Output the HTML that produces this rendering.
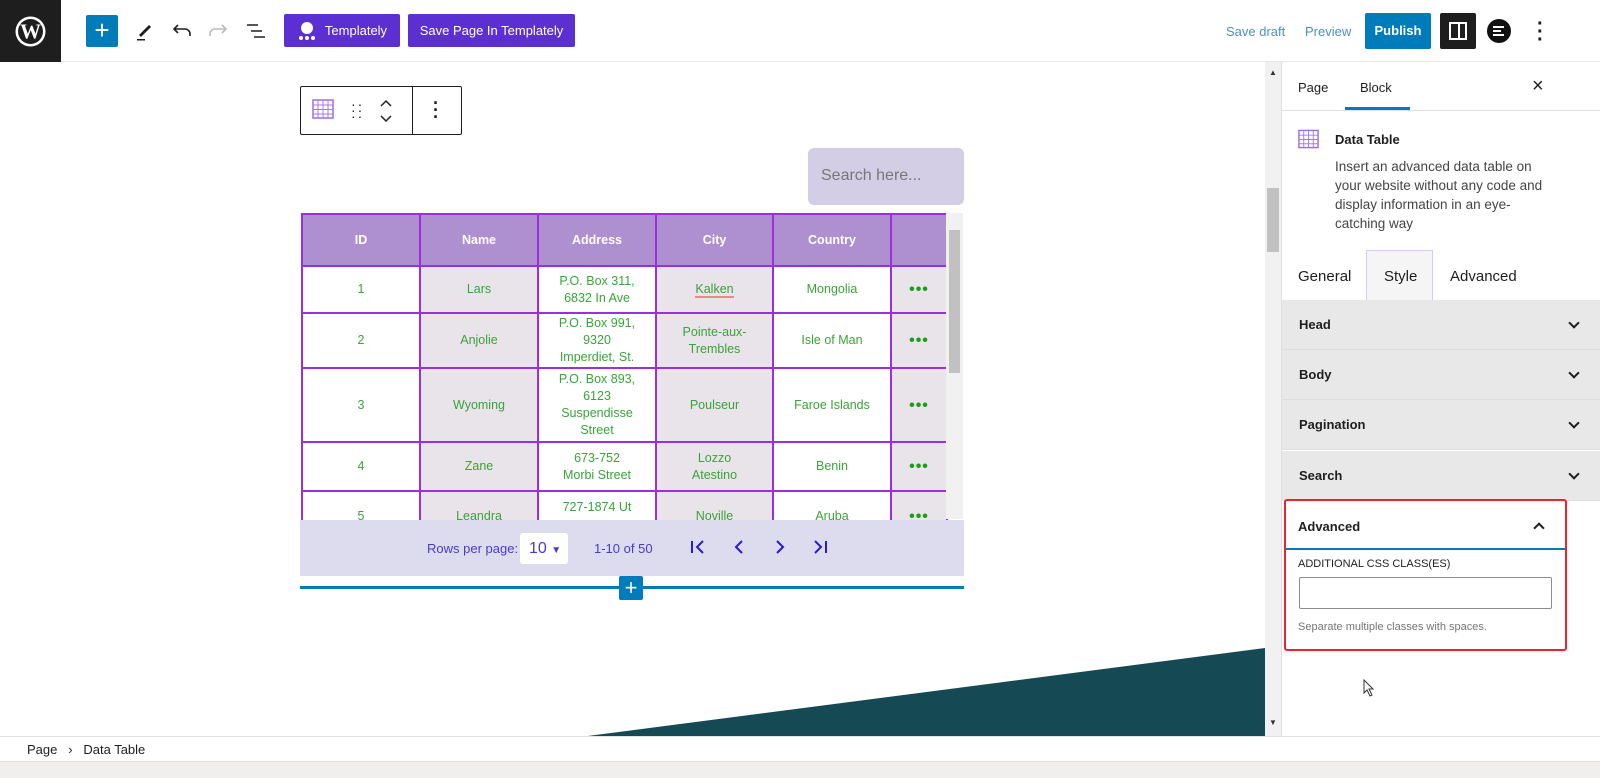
<!DOCTYPE html>
<html><head><style>
*{box-sizing:border-box;margin:0;padding:0}
body{width:1600px;height:778px;overflow:hidden;background:#fff;font-family:"Liberation Sans",sans-serif;position:relative;font-size:13px;color:#1e1e1e}
.abs{position:absolute}
.top{left:0;top:0;width:1600px;height:62px;border-bottom:1px solid #e6e6e6;background:#fff}
.btnp{background:#5b2fd1;color:#fff;border-radius:2px;height:33px;top:14px;font-size:13px;display:flex;align-items:center;justify-content:center}
table{border-collapse:collapse;position:absolute;left:301px;top:213px;table-layout:fixed}
td,th{border:2px solid #9a2fe0;text-align:center;font-size:12.5px;color:#3aa33a;font-weight:normal;line-height:17px}
th{background:#ae8fd0;color:#fff;font-weight:bold;height:52px}
td.g{background:#e8e4ea}
.dots{color:#1a9e1a;font-weight:bold;font-size:16px;letter-spacing:1px}
.acc{left:1282px;width:318px;height:50px;background:#e8e8e8;border-bottom:1px solid #ddd;font-size:13px;padding:0 0 0 17px;display:flex;align-items:center;justify-content:space-between}
.acc span.c{margin-right:22px;width:8px;height:8px;border-right:2px solid #1e1e1e;border-bottom:2px solid #1e1e1e;transform:rotate(45deg);margin-top:-4px}
.pg{position:absolute;top:19px}
</style></head><body>
<div class="abs top"></div>
<div class="abs" style="left:0;top:0;width:61px;height:62px;background:#1e1e1e"></div>
<svg class="abs" style="left:14px;top:15px" width="33" height="33" viewBox="0 0 33 33"><circle cx="16.5" cy="16.5" r="15" fill="#fff"/><circle cx="16.5" cy="16.5" r="12.5" fill="#1e1e1e"/><text x="16.5" y="23.5" text-anchor="middle" font-family="Liberation Serif" font-weight="bold" font-size="21" fill="#fff">W</text></svg>
<div class="abs" style="left:86px;top:15px;width:32px;height:32px;background:#007cba;border-radius:2px;color:#fff;font-size:26px;line-height:30px;text-align:center">+</div>
<svg class="abs" style="left:134px;top:20px" width="22" height="22" viewBox="0 0 22 22"><path d="M5 15 L15 5 L17 7 L7 17 Z" fill="#1e1e1e"/><rect x="3" y="19" width="8" height="1.5" fill="#1e1e1e"/></svg>
<svg class="abs" style="left:171px;top:22px" width="22" height="18" viewBox="0 0 22 18"><path d="M7 3 L3 7 L7 11 M3 7 H14 a5 5 0 0 1 5 5 V14" fill="none" stroke="#1e1e1e" stroke-width="1.6"/></svg>
<svg class="abs" style="left:207px;top:22px" width="22" height="18" viewBox="0 0 22 18"><path d="M15 3 L19 7 L15 11 M19 7 H8 a5 5 0 0 0 -5 5 V14" fill="none" stroke="#bbb" stroke-width="1.6"/></svg>
<svg class="abs" style="left:245px;top:22px" width="22" height="18" viewBox="0 0 22 18"><path d="M2 3 H13 M6 9 H17 M9 15 H20" stroke="#1e1e1e" stroke-width="1.6"/></svg>
<div class="abs btnp" style="left:284px;width:116px"><svg width="20" height="22" viewBox="0 0 20 22" style="margin-right:8px"><circle cx="10" cy="8" r="6" fill="#fff"/><circle cx="4" cy="18" r="2" fill="#fff"/><circle cx="10" cy="18" r="2" fill="#fff"/><circle cx="16" cy="18" r="2" fill="#fff"/></svg>Templately</div>
<div class="abs btnp" style="left:408px;width:167px">Save Page In Templately</div>
<div class="abs" style="left:1226px;top:24px;color:#4a90c8;font-size:13px">Save draft</div>
<div class="abs" style="left:1305px;top:24px;color:#4a90c8;font-size:13px">Preview</div>
<div class="abs" style="left:1365px;top:13px;width:66px;height:36px;background:#007cba;color:#fff;border-radius:2px;text-align:center;line-height:36px;font-size:13px;font-weight:bold">Publish</div>
<div class="abs" style="left:1440px;top:13px;width:36px;height:36px;background:#1e1e1e;border-radius:2px"><div class="abs" style="left:9px;top:9px;width:18px;height:18px;border:2px solid #fff"></div><div class="abs" style="left:18px;top:9px;width:2px;height:18px;background:#fff"></div></div>
<div class="abs" style="left:1487px;top:19px;width:24px;height:24px;border-radius:50%;background:#111"><div class="abs" style="left:6px;top:7px;width:11px;height:2px;background:#fff"></div><div class="abs" style="left:6px;top:11px;width:8px;height:2px;background:#fff"></div><div class="abs" style="left:6px;top:15px;width:11px;height:2px;background:#fff"></div></div>
<div class="abs" style="left:1537px;top:20px;color:#1e1e1e;font-size:20px;line-height:8px;font-weight:bold">·<br>·<br>·</div>

<div class="abs" style="left:300px;top:86px;width:162px;height:49px;border:1px solid #1e1e1e;border-radius:2px;background:#fff"></div>
<div class="abs" style="left:412px;top:86px;width:1px;height:49px;background:#1e1e1e"></div>
<svg class="abs" style="left:312px;top:99px" width="22" height="20" viewBox="0 0 22 20"><rect x="1" y="1" width="20" height="18" fill="none" stroke="#9b6cf0" stroke-width="1.5"/><path d="M1 6H21M1 10.5H21M1 15H21M6 1V19M11 1V19M16 1V19" stroke="#a77af0" stroke-width="1"/></svg>
<div class="abs" style="left:351px;top:101px;color:#1e1e1e;font-size:14px;line-height:6px;letter-spacing:2px">··<br>··<br>··</div>
<svg class="abs" style="left:378px;top:97px" width="16" height="28" viewBox="0 0 16 28"><path d="M3 9 L8 4 L13 9 M3 19 L8 24 L13 19" fill="none" stroke="#1e1e1e" stroke-width="1.5"/></svg>
<div class="abs" style="left:433px;top:100px;color:#1e1e1e;font-size:18px;line-height:7px;font-weight:bold">·<br>·<br>·</div>

<div class="abs" style="left:808px;top:148px;width:156px;height:57px;background:#d3cde6;border-radius:6px;color:#777;font-size:16px;padding:19px 0 0 13px">Search here...</div>

<table>
<colgroup><col width="118"><col width="118"><col width="118"><col width="117"><col width="118"><col width="56"></colgroup>
<tr><th>ID</th><th>Name</th><th>Address</th><th>City</th><th>Country</th><th></th></tr>
<tr style="height:47px"><td>1</td><td class="g">Lars</td><td>P.O. Box 311,<br>6832 In Ave</td><td class="g"><span style="border-bottom:2px solid #e98a8a">Kalken</span></td><td>Mongolia</td><td class="g dots">•••</td></tr>
<tr style="height:55px"><td>2</td><td class="g">Anjolie</td><td>P.O. Box 991,<br>9320<br>Imperdiet, St.</td><td class="g">Pointe-aux-<br>Trembles</td><td>Isle of Man</td><td class="g dots">•••</td></tr>
<tr style="height:74px"><td>3</td><td class="g">Wyoming</td><td>P.O. Box 893,<br>6123<br>Suspendisse<br>Street</td><td class="g">Poulseur</td><td>Faroe Islands</td><td class="g dots">•••</td></tr>
<tr style="height:49px"><td>4</td><td class="g">Zane</td><td>673-752<br>Morbi Street</td><td class="g">Lozzo<br>Atestino</td><td>Benin</td><td class="g dots">•••</td></tr>
<tr style="height:50px"><td>5</td><td class="g">Leandra</td><td>727-1874 Ut<br>&nbsp;</td><td class="g">Noville</td><td>Aruba</td><td class="g dots">•••</td></tr>
</table>
<div class="abs" style="left:946px;top:213px;width:17px;height:306px;background:#f1f1f1"><div class="abs" style="left:3px;top:17px;width:11px;height:143px;background:#c1c1c1"></div></div>
<div class="abs" style="left:300px;top:520px;width:664px;height:56px;background:#dddcee;font-size:13px;color:#4a3ad0">
<div class="abs" style="left:127px;top:21px">Rows per page:</div>
<div class="abs" style="left:220px;top:13px;width:48px;height:31px;background:#fff;border-radius:3px;font-size:16px;padding:7px 0 0 9px">10 <span style="font-size:10px">▼</span></div>
<div class="abs" style="left:294px;top:21px">1-10 of 50</div>
<svg class="pg" style="left:390px" width="16" height="16" viewBox="0 0 16 16"><path d="M2 2V14M13 2L7 8L13 14" fill="none" stroke="#2a1ad0" stroke-width="2"/></svg>
<svg class="pg" style="left:431px" width="16" height="16" viewBox="0 0 16 16"><path d="M11 2L5 8L11 14" fill="none" stroke="#2a1ad0" stroke-width="2"/></svg>
<svg class="pg" style="left:472px" width="16" height="16" viewBox="0 0 16 16"><path d="M5 2L11 8L5 14" fill="none" stroke="#2a1ad0" stroke-width="2"/></svg>
<svg class="pg" style="left:512px" width="16" height="16" viewBox="0 0 16 16"><path d="M3 2L9 8L3 14M14 2V14" fill="none" stroke="#2a1ad0" stroke-width="2"/></svg>
</div>
<div class="abs" style="left:300px;top:586px;width:664px;height:3px;background:#007cba"></div>
<div class="abs" style="left:619px;top:576px;width:24px;height:24px;background:#007cba;color:#fff;text-align:center;font-size:22px;line-height:23px;border-radius:2px">+</div>

<svg class="abs" style="left:0;top:640px" width="1265" height="97"><polygon points="580,97 1265,8 1265,97" fill="#154a55"/></svg>
<div class="abs" style="left:1265px;top:62px;width:16px;height:674px;background:#f1f1f1"><div class="abs" style="left:2px;top:126px;width:12px;height:64px;background:#c1c1c1"></div><div class="abs" style="left:4px;top:6px;font-size:8px;color:#333">▲</div><div class="abs" style="left:4px;top:656px;font-size:8px;color:#333">▼</div></div>

<div class="abs" style="left:1281px;top:62px;width:1px;height:674px;background:#e0e0e0"></div>
<div class="abs" style="left:1282px;top:62px;width:318px;height:49px;border-bottom:1px solid #e0e0e0"></div>
<div class="abs" style="left:1298px;top:80px;font-size:13px">Page</div>
<div class="abs" style="left:1360px;top:80px;font-size:13px">Block</div>
<div class="abs" style="left:1345px;top:107px;width:65px;height:3px;background:#007cba"></div>
<div class="abs" style="left:1532px;top:75px;font-size:20px">×</div>
<svg class="abs" style="left:1298px;top:129px" width="21" height="20" viewBox="0 0 22 20"><rect x="1" y="1" width="20" height="18" fill="none" stroke="#9b6cf0" stroke-width="1.5"/><path d="M1 6H21M1 10.5H21M1 15H21M6 1V19M11 1V19M16 1V19" stroke="#a77af0" stroke-width="1"/></svg>
<div class="abs" style="left:1335px;top:132px;font-size:13px;font-weight:bold;color:#1e1e1e">Data Table</div>
<div class="abs" style="left:1335px;top:157px;width:210px;font-size:13.5px;line-height:19px;color:#444">Insert an advanced data table on your website without any code and display information in an eye-catching way</div>
<div class="abs" style="left:1366px;top:250px;width:67px;height:50px;background:#f5f5f5;border:1px solid #d8c8f8;border-bottom:none"></div>
<div class="abs" style="left:1298px;top:268px;font-size:15px">General</div>
<div class="abs" style="left:1384px;top:268px;font-size:15px">Style</div>
<div class="abs" style="left:1450px;top:268px;font-size:15px">Advanced</div>
<div class="abs acc" style="top:300px"><b style="font-size:13px">Head</b><span class="c"></span></div>
<div class="abs acc" style="top:350px"><b style="font-size:13px">Body</b><span class="c"></span></div>
<div class="abs acc" style="top:400px"><b style="font-size:13px">Pagination</b><span class="c"></span></div>
<div class="abs acc" style="top:451px"><b style="font-size:13px">Search</b><span class="c"></span></div>
<div class="abs" style="left:1284px;top:499px;width:283px;height:152px;border:2px solid #e8262c;border-radius:3px;background:#fff"></div>
<div class="abs" style="left:1286px;top:548px;width:279px;height:2px;background:#007cba"></div>
<div class="abs" style="left:1298px;top:519px;font-size:13px;font-weight:bold">Advanced</div>
<div class="abs" style="left:1535px;top:524px;width:8px;height:8px;border-left:2px solid #1e1e1e;border-top:2px solid #1e1e1e;transform:rotate(45deg)"></div>
<div class="abs" style="left:1298px;top:558px;font-size:11px;color:#1e1e1e">ADDITIONAL CSS CLASS(ES)</div>
<div class="abs" style="left:1299px;top:577px;width:253px;height:32px;border:1px solid #8c8c8c;border-radius:2px"></div>
<div class="abs" style="left:1298px;top:621px;font-size:11px;color:#757575">Separate multiple classes with spaces.</div>
<svg class="abs" style="left:1363px;top:679px" width="12" height="18"><path d="M1 1 L1 14 L4 11 L7 17 L9 16 L6 10 L10 10 Z" fill="#fff" stroke="#333"/></svg>

<div class="abs" style="left:0;top:736px;width:1600px;height:42px;border-top:1px solid #e0e0e0;background:#fff"></div>
<div class="abs" style="left:27px;top:742px;font-size:13px;color:#1e1e1e">Page &nbsp;&nbsp;›&nbsp;&nbsp; Data Table</div>
<div class="abs" style="left:0;top:761px;width:1600px;height:17px;background:#f0efee;border-top:1px solid #ddd"></div>
</body></html>
